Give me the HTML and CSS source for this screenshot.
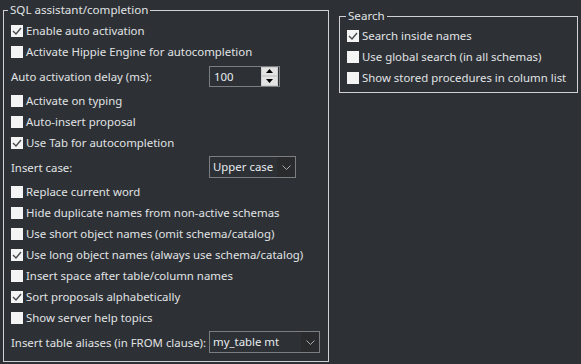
FILE: index.html
```html
<!DOCTYPE html>
<html lang="en">
<head>
    <meta charset="UTF-8">
    <title>SQL Completion Preferences</title>
    <link rel="stylesheet" href="styles.css">
</head>
<body>
    <div class="prefs">
        <!-- Left group -->
        <fieldset class="group group-sql">
            <legend>SQL assistant/completion</legend>
            <label class="check"><span class="box on"></span>Enable auto activation</label>
            <label class="check"><span class="box"></span>Activate Hippie Engine for autocompletion</label>
            <div class="field">
                <span class="field-label">Auto activation delay (ms):</span>
                <div class="spin">
                    <span class="spin-value">100</span>
                    <div class="spin-btns">
                        <span class="spin-btn"><svg width="7" height="4" viewBox="0 0 7 4"><polygon points="3.5,0 7,4 0,4" fill="#000"/></svg></span>
                        <span class="spin-btn"><svg width="7" height="4" viewBox="0 0 7 4"><polygon points="0,0 7,0 3.5,4" fill="#000"/></svg></span>
                    </div>
                </div>
            </div>
            <label class="check"><span class="box"></span>Activate on typing</label>
            <label class="check"><span class="box"></span>Auto-insert proposal</label>
            <label class="check"><span class="box on"></span>Use Tab for autocompletion</label>
            <div class="field">
                <span class="field-label">Insert case:</span>
                <div class="combo combo-case">
                    <span class="combo-value">Upper case</span>
                    <span class="combo-arrow"><svg width="9" height="5" viewBox="0 0 9 5"><polyline points="0.5,0.5 4.5,4.5 8.5,0.5" fill="none" stroke="#a9abad" stroke-width="1"/></svg></span>
                </div>
            </div>
            <label class="check"><span class="box"></span>Replace current word</label>
            <label class="check"><span class="box"></span>Hide duplicate names from non-active schemas</label>
            <label class="check"><span class="box"></span>Use short object names (omit schema/catalog)</label>
            <label class="check"><span class="box on"></span>Use long object names (always use schema/catalog)</label>
            <label class="check"><span class="box"></span>Insert space after table/column names</label>
            <label class="check"><span class="box on"></span>Sort proposals alphabetically</label>
            <label class="check"><span class="box"></span>Show server help topics</label>
            <div class="field">
                <span class="field-label">Insert table aliases (in FROM clause):</span>
                <div class="combo combo-alias">
                    <span class="combo-value">my_table mt</span>
                    <span class="combo-arrow"><svg width="9" height="5" viewBox="0 0 9 5"><polyline points="0.5,0.5 4.5,4.5 8.5,0.5" fill="none" stroke="#a9abad" stroke-width="1"/></svg></span>
                </div>
            </div>
        </fieldset>

        <!-- Right group -->
        <fieldset class="group group-search">
            <legend>Search</legend>
            <label class="check"><span class="box on"></span>Search inside names</label>
            <label class="check"><span class="box"></span>Use global search (in all schemas)</label>
            <label class="check"><span class="box"></span>Show stored procedures in column list</label>
        </fieldset>
    </div>
</body>
</html>
```

FILE: styles.css
```css
body {
    margin: 0;
    background-color: #2d3135;
    color: #e1e3e5;
    font-family: "Noto Sans", "Open Sans", sans-serif;
    font-size: 11.4px;
}

.prefs {
    display: flex;
    align-items: flex-start;
    gap: 10px;
    padding: 3px 0 0 3px;
}

.group {
    box-sizing: border-box;
    margin: 0;
    border: 1px solid #cfd1d3;
    min-width: 0;
}

.group legend {
    font-size: 11.6px;
    line-height: 14px;
    padding: 0 2px;
}

.group-sql {
    width: 326px;
    padding: 3px 6px 5px 7px;
}

.group-sql legend {
    margin-left: -3px;
}

.group-search {
    width: 239px;
    margin-top: 6px;
    padding: 2px 6px 4px 7px;
}

.group-search legend {
    margin-left: -1px;
}

.check {
    display: flex;
    align-items: center;
    height: 21px;
    white-space: nowrap;
}

.box {
    box-sizing: border-box;
    width: 12px;
    height: 12px;
    margin-right: 3px;
    background-color: #f4f4f4;
    flex-shrink: 0;
}

.box.on {
    background-image: url("data:image/svg+xml,%3Csvg xmlns='http://www.w3.org/2000/svg' width='12' height='12' viewBox='0 0 12 12'%3E%3Cpolyline points='2,6 5,9 10,3' fill='none' stroke='%23474a4d' stroke-width='1.4'/%3E%3C/svg%3E");
}

.field {
    display: flex;
    align-items: center;
    height: 28px;
    white-space: nowrap;
}

.field-label {
    width: 198px;
    flex-shrink: 0;
}

.spin {
    box-sizing: border-box;
    display: flex;
    width: 71px;
    height: 21px;
    border: 1px solid #7b7e81;
}

.spin-value {
    flex: 1;
    padding-left: 4px;
    line-height: 19px;
    color: #e6ebf0;
}

.spin-btns {
    display: flex;
    flex-direction: column;
    width: 17px;
    padding: 0 1px 0 0;
}

.spin-btn {
    flex: 1;
    display: flex;
    align-items: center;
    justify-content: center;
    background-color: #e3e3e3;
    border: 1px solid #cfcfcf;
}

.combo {
    box-sizing: border-box;
    display: flex;
    height: 22px;
    border: 1px solid #7b7e81;
}

.combo-case {
    width: 87px;
}

.combo-alias {
    width: 111px;
}

.combo-value {
    flex: 1;
    padding-left: 3px;
    line-height: 20px;
    color: #e6ebf0;
}

.combo-arrow {
    width: 18px;
    display: flex;
    align-items: center;
    justify-content: center;
    background-color: #2a2b2d;
}
```
